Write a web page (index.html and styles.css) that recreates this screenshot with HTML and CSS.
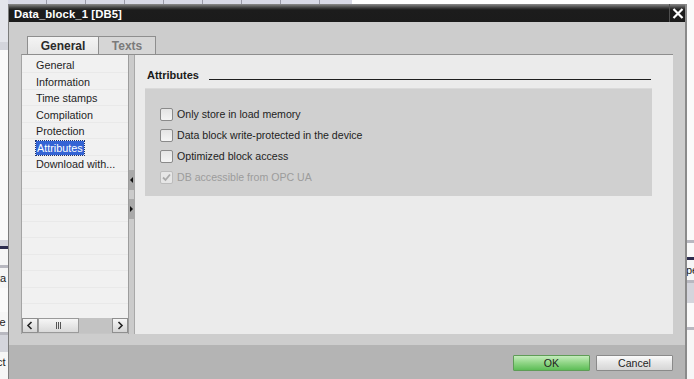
FILE: index.html
```html
<!DOCTYPE html>
<html lang="en">
<head>
  <meta charset="UTF-8">
  <title>Data_block_1 [DB5]</title>
  <link rel="stylesheet" href="styles.css">
</head>
<body>
  <div class="app">
    <div class="app-left">
      <div class="seg light"></div>
      <div class="seg band"></div>
      <div class="seg white tall"></div>
      <div class="seg band thin"></div>
      <div class="seg navy"></div>
      <div class="seg cell short"><span class="sel">]</span></div>
      <div class="seg line"></div>
      <div class="seg cell">ta</div>
      <div class="seg white mid"></div>
      <div class="seg cell">le</div>
      <div class="seg line"></div>
      <div class="seg band low"></div>
      <div class="seg cell">ct</div>
    </div>
    <div class="app-mid">
      <div class="ruler"></div>
    </div>
    <div class="app-right">
      <div class="seg white tall2"></div>
      <div class="seg line"></div>
      <div class="seg white small"></div>
      <div class="seg navy"></div>
      <div class="seg cell">pe</div>
      <div class="seg line"></div>
      <div class="seg band mid"></div>
      <div class="seg white mid"></div>
      <div class="seg line"></div>
    </div>
  </div>

  <div class="dialog">
    <div class="titlebar">
      <span class="title">Data_block_1 [DB5]</span>
      <span class="close">
        <svg width="12" height="11" viewBox="0 0 12 11"><path d="M1.5 1 L10.5 10 M10.5 1 L1.5 10" stroke="#fff" stroke-width="2.2" fill="none"/></svg>
      </span>
    </div>

    <div class="body">
      <div class="tabs">
        <div class="tab active">General</div>
        <div class="tab">Texts</div>
      </div>

      <div class="panel">
        <div class="nav">
          <ul class="nav-list">
            <li>General</li>
            <li>Information</li>
            <li>Time stamps</li>
            <li>Compilation</li>
            <li>Protection</li>
            <li><span class="current">Attributes</span></li>
            <li>Download with...</li>
          </ul>
          <div class="hscroll">
            <span class="sbtn">
              <svg width="8" height="9" viewBox="0 0 8 9"><path d="M5.5 1 L2 4.5 L5.5 8" stroke="#222" stroke-width="1.6" fill="none"/></svg>
            </span>
            <span class="thumb"><i></i><i></i><i></i></span>
            <span class="track"></span>
            <span class="sbtn">
              <svg width="8" height="9" viewBox="0 0 8 9"><path d="M2.5 1 L6 4.5 L2.5 8" stroke="#222" stroke-width="1.6" fill="none"/></svg>
            </span>
          </div>
        </div>

        <div class="splitter">
          <span class="knob"><b class="arrow-left"></b></span>
          <span class="knob"><b class="arrow-right"></b></span>
        </div>

        <div class="content">
          <div class="section-head">
            <h2>Attributes</h2>
            <span class="rule"></span>
          </div>
          <div class="group">
            <label class="check"><span class="box"></span>Only store in load memory</label>
            <label class="check"><span class="box"></span>Data block write-protected in the device</label>
            <label class="check"><span class="box"></span>Optimized block access</label>
            <label class="check disabled">
              <span class="box checked">
                <svg width="11" height="11" viewBox="0 0 11 11"><path d="M2 5.5 L4.5 8 L9 2.5" stroke="#a9a9a9" stroke-width="1.8" fill="none"/></svg>
              </span>DB accessible from OPC UA
            </label>
          </div>
        </div>
      </div>
    </div>

    <div class="footer">
      <button class="btn ok">OK</button>
      <button class="btn">Cancel</button>
    </div>
  </div>
</body>
</html>
```

FILE: styles.css
```css
html, body {
  margin: 0;
  height: 100%;
  overflow: hidden;
}

body {
  font-family: "Liberation Sans", Arial, sans-serif;
  font-size: 11px;
  color: #1a1a1a;
  background: #ffffff;
}

/* background application */
.app {
  display: flex;
  height: 379px;
}

.app-left {
  width: 8px;
  display: flex;
  flex-direction: column;
  overflow: hidden;
  background: #f6f6f6;
}

.app-right {
  width: 7px;
  display: flex;
  flex-direction: column;
  overflow: hidden;
  background: #f6f6f6;
}

.app-mid {
  flex: 1;
}

.ruler {
  height: 4px;
  width: 344px;
  background: repeating-linear-gradient(90deg, #d8d9e6 0 38px, #9a9aa8 38px 39px);
}

.seg {
  flex: none;
  font-size: 11px;
  line-height: 15px;
  white-space: nowrap;
  color: #222;
}

.seg.light { height: 42px; background: #e4e5eb; }
.seg.band { height: 8px; background: #d4d5dc; }
.seg.band.thin { height: 6px; }
.seg.band.mid { height: 20px; }
.seg.band.low { height: 17px; }
.seg.white { background: #fafafa; }
.seg.white.tall { height: 190px; }
.seg.white.tall2 { height: 240px; }
.seg.white.small { height: 14px; }
.seg.white.mid { height: 24px; }
.seg.navy { height: 3px; background: #2d2d4e; }
.seg.line { height: 3px; background: #b8b8c0; }
.seg.cell { height: 20px; line-height: 20px; }
.seg.cell.short { height: 16px; line-height: 16px; }

.app-left .seg.cell { text-indent: -3px; }
.app-right .seg.cell { text-indent: -1px; }

.sel {
  color: #4a6ed0;
}

/* dialog window */
.dialog {
  position: absolute;
  left: 8px;
  top: 4px;
  width: 676px;
  height: 380px;
  border-left: 1px solid #7c7c7c;
  border-right: 2px solid #8a8a8a;
  display: flex;
  flex-direction: column;
  background: #cdcdcd;
}

.titlebar {
  height: 18px;
  flex: none;
  display: flex;
  align-items: center;
  justify-content: space-between;
  background: linear-gradient(#8c8c8c 0, #3a3a3a 4px, #1c1c1c 6px, #1b1b1b 100%);
}

.title {
  color: #ffffff;
  font-weight: bold;
  font-size: 11.3px;
  padding-left: 5px;
  padding-top: 2px;
  letter-spacing: 0.1px;
}

.close {
  width: 16px;
  height: 18px;
  display: flex;
  align-items: center;
  justify-content: center;
  border-left: 1px solid #505050;
  padding-top: 1px;
  box-sizing: border-box;
}

.body {
  height: 323px;
  flex: none;
  padding: 14px 12px 0 12px;
  box-sizing: border-box;
  background: #cdcdcd;
}

.tabs {
  display: flex;
  margin-left: 6px;
  height: 18px;
}

.tab {
  width: 57px;
  height: 18px;
  box-sizing: border-box;
  border: 1px solid #8e8e8e;
  border-bottom: none;
  border-left: none;
  background: #d6d6d6;
  color: #7b7b7b;
  font-weight: bold;
  font-size: 12px;
  line-height: 18px;
  text-align: center;
}

.tab.active {
  width: 72px;
  border-left: 1px solid #8e8e8e;
  background: linear-gradient(#f4f4f4, #e6e6e6);
  color: #2a2a2a;
}

.panel {
  height: 280px;
  display: flex;
  border-top: 1px solid #8e8e8e;
  border-left: 1px solid #a4a4a4;
  box-sizing: border-box;
}

/* navigation list */
.nav {
  width: 106px;
  display: flex;
  flex-direction: column;
  background: #f1f1f1;
}

.nav-list {
  flex: 1;
  list-style: none;
  margin: 0;
  padding: 2px 0 0 0;
  background: repeating-linear-gradient(#f1f1f1 0 15.5px, #e9e9e9 15.5px 16.5px);
  background-position: 0 2px;
}

.nav-list li {
  height: 16.5px;
  line-height: 16px;
  padding-left: 14px;
  font-size: 10.8px;
  color: #1e1e1e;
  white-space: nowrap;
}

.current {
  display: inline-block;
  background: #3464d4;
  color: #ffffff;
  padding: 0 1px;
  line-height: 14px;
  outline: 1px dotted #1a2f70;
}

.hscroll {
  height: 16px;
  display: flex;
  box-sizing: border-box;
  padding-bottom: 1px;
  background: #c6c6c6;
}

.sbtn {
  width: 16px;
  box-sizing: border-box;
  border: 1px solid #8f8f8f;
  background: linear-gradient(#f6f6f6, #d4d4d4);
  display: flex;
  align-items: center;
  justify-content: center;
}

.thumb {
  width: 41px;
  box-sizing: border-box;
  border: 1px solid #9a9a9a;
  background: linear-gradient(#f6f6f6, #d9d9d9);
  display: flex;
  align-items: center;
  justify-content: center;
  gap: 1px;
}

.thumb i {
  width: 1px;
  height: 7px;
  background: #555;
}

.track {
  flex: 1;
  background: #c3c3c3;
}

/* splitter */
.splitter {
  width: 7px;
  box-sizing: border-box;
  border-left: 1px solid #9c9c9c;
  border-right: 1px solid #a8a8a8;
  background: #cbcbcb;
  display: flex;
  flex-direction: column;
  gap: 9px;
  padding-top: 115px;
}

.knob {
  height: 20px;
  background: #a9a9a9;
  display: flex;
  align-items: center;
  justify-content: center;
}

.arrow-left {
  width: 0;
  height: 0;
  border-top: 3px solid transparent;
  border-bottom: 3px solid transparent;
  border-right: 3px solid #111;
}

.arrow-right {
  width: 0;
  height: 0;
  border-top: 3px solid transparent;
  border-bottom: 3px solid transparent;
  border-left: 3px solid #111;
}

/* content */
.content {
  flex: 1;
  background: #ebebeb;
  padding: 12px 21px 0 10px;
}

.section-head {
  display: flex;
  align-items: center;
  gap: 10px;
  height: 16px;
  padding-left: 2px;
}

.section-head h2 {
  margin: 0;
  font-size: 11px;
  font-weight: bold;
  color: #1a1a1a;
}

.rule {
  flex: 1;
  height: 1px;
  margin-top: 8px;
  margin-right: 1px;
  background: #1e1e1e;
}

.group {
  margin-top: 5px;
  height: 108px;
  box-sizing: border-box;
  background: #d0d0d0;
  border-top: 1px solid #dadada;
  padding: 19px 0 0 15px;
  display: flex;
  flex-direction: column;
}

.check {
  height: 21px;
  display: flex;
  align-items: flex-start;
  gap: 4px;
  font-size: 10.6px;
  line-height: 13px;
  color: #1e1e1e;
  white-space: nowrap;
}

.box {
  width: 13px;
  height: 13px;
  box-sizing: border-box;
  border: 1px solid #8a8a8a;
  border-radius: 2px;
  background: linear-gradient(#e4e4e4, #f4f4f4);
  display: flex;
  align-items: center;
  justify-content: center;
}

.check.disabled {
  color: #9c9c9c;
}

.box.checked {
  border-color: #bcbcbc;
  background: #e6e6e6;
}

/* footer */
.footer {
  flex: 1;
  background: #b4b4b4;
  display: flex;
  justify-content: flex-end;
  align-items: flex-start;
  gap: 6px;
  padding: 10px 12px 0 0;
}

.btn {
  font-family: "Liberation Sans", Arial, sans-serif;
  font-size: 10.6px;
  width: 77px;
  height: 16px;
  padding: 0;
  border: 1px solid #8a8a8a;
  border-radius: 1px;
  background: linear-gradient(#fafafa, #e6e6e6 50%, #d6d6d6);
  color: #1e1e1e;
  line-height: 14px;
}

.btn.ok {
  border-color: #5f9c57;
  background: linear-gradient(#c4ecbc, #8fd585 50%, #5dbd57);
}
```
